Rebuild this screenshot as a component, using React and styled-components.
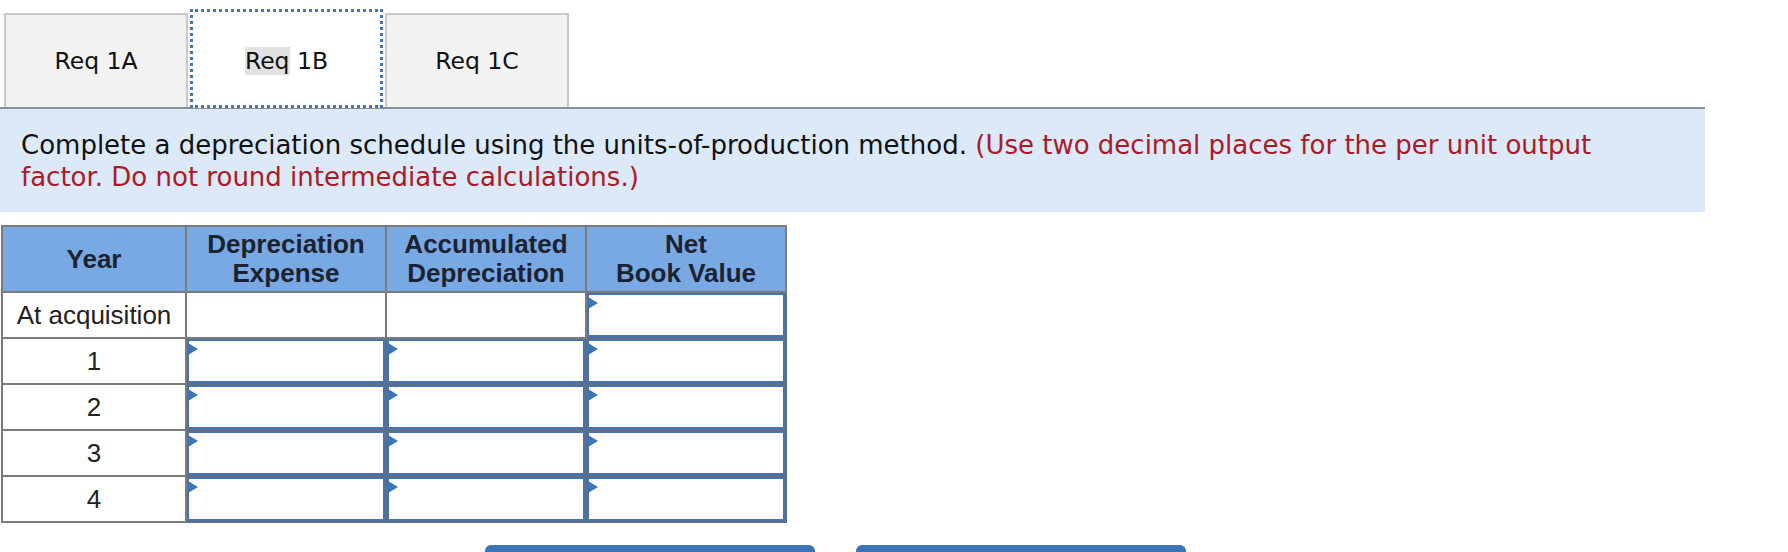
import React from "react";
import styled, { createGlobalStyle } from "styled-components";

const GlobalStyle = createGlobalStyle`
  html, body {
    margin: 0;
    padding: 0;
    background: #ffffff;
  }
  body {
    font-family: "DejaVu Sans", Verdana, sans-serif;
  }
`;

const Page = styled.div`
  width: 1788px;
  height: 552px;
  padding-top: 9px;
  box-sizing: border-box;
  overflow: hidden;
`;

const TabBar = styled.div`
  display: flex;
  align-items: flex-end;
  gap: 2px;
  padding-left: 4px;
`;

const Tab = styled.button`
  box-sizing: border-box;
  width: ${(p) => (p.$active ? "193px" : "184px")};
  height: ${(p) => (p.$active ? "99px" : "94px")};
  margin-bottom: ${(p) => (p.$active ? "-1px" : "0")};
  padding: ${(p) => (p.$active ? "5px 0 0" : "0")};
  position: relative;
  z-index: ${(p) => (p.$active ? 2 : 0)};
  border: ${(p) => (p.$active ? "3px dotted #4a74ad" : "2px solid #c9c9c9")};
  border-bottom: ${(p) => (p.$active ? "3px dotted #4a74ad" : "none")};
  background: ${(p) => (p.$active ? "#ffffff" : "#f2f2f2")};
  font-family: "DejaVu Sans", Verdana, sans-serif;
  font-size: 23.5px;
  color: #111;
  display: flex;
  align-items: center;
  justify-content: center;
`;

const Highlight = styled.span`
  background: #e2e2e2;
  line-height: 29px;
`;

const InfoBox = styled.div`
  position: relative;
  z-index: 1;
  width: 1705px;
  box-sizing: border-box;
  background: #dbe9f8;
  border-top: 2px solid #8c9094;
  padding: 20px 21px 19px;
  font-size: 26px;
  line-height: 32px;
  color: #111;
`;

const Note = styled.span`
  color: #ab1a24;
`;

const Table = styled.table`
  margin: 13px 0 0 1px;
  border-collapse: collapse;
  border: 2px solid #7b7b7b;
  font-family: "Liberation Sans", Arial, sans-serif;
`;

const HeadCell = styled.th`
  width: ${(p) => p.$w}px;
  height: 64px;
  padding: 0;
  background: #79a9e3;
  border: 2px solid #7b7b7b;
  color: #1b2333;
  font-size: 26px;
  font-weight: 700;
  line-height: 29px;
  text-align: center;
`;

const YearCell = styled.td`
  height: 44px;
  padding: 0;
  border: 2px solid #7b7b7b;
  font-size: 26px;
  color: #222;
  text-align: center;
`;

const PlainCell = styled.td`
  padding: 0;
  border: 2px solid #7b7b7b;
  background: #fff;
`;

const InputCell = styled.td`
  padding: 0;
  border: 2px solid #5d6f88;
  background: #fff;
`;

const InputBox = styled.div`
  position: relative;
  box-sizing: border-box;
  height: 44px;
  border: 2px solid #4b73ab;
  background: #fff;

  &::before {
    content: "";
    position: absolute;
    left: -1px;
    top: 2px;
    border-left: 10px solid #3c74b8;
    border-top: 6.5px solid transparent;
    border-bottom: 6.5px solid transparent;
  }
`;

const ButtonRow = styled.div`
  display: flex;
  gap: 41px;
  margin: 22px 0 0 485px;
`;

const NavButton = styled.button`
  width: 330px;
  height: 44px;
  border: none;
  border-radius: 6px 6px 0 0;
  background: #3b74b6;
`;

const years = ["1", "2", "3", "4"];

const App = () => {
  return (
    <Page>
      <GlobalStyle />
      <TabBar>
        <Tab>Req 1A</Tab>
        <Tab $active>
          <span>
            <Highlight>Req</Highlight> 1B
          </span>
        </Tab>
        <Tab>Req 1C</Tab>
      </TabBar>
      <InfoBox>
        Complete a depreciation schedule using the units-of-production method.{" "}
        <Note>
          (Use two decimal places for the per unit output
          <br />
          factor. Do not round intermediate calculations.)
        </Note>
      </InfoBox>
      <Table>
        <thead>
          <tr>
            <HeadCell $w={182}>Year</HeadCell>
            <HeadCell $w={198}>
              Depreciation
              <br />
              Expense
            </HeadCell>
            <HeadCell $w={198}>
              Accumulated
              <br />
              Depreciation
            </HeadCell>
            <HeadCell $w={198}>
              Net
              <br />
              Book Value
            </HeadCell>
          </tr>
        </thead>
        <tbody>
          <tr>
            <YearCell>At acquisition</YearCell>
            <PlainCell />
            <PlainCell />
            <InputCell>
              <InputBox />
            </InputCell>
          </tr>
          {years.map((y) => (
            <tr key={y}>
              <YearCell>{y}</YearCell>
              <InputCell>
                <InputBox />
              </InputCell>
              <InputCell>
                <InputBox />
              </InputCell>
              <InputCell>
                <InputBox />
              </InputCell>
            </tr>
          ))}
        </tbody>
      </Table>
      <ButtonRow>
        <NavButton aria-label="Previous requirement" />
        <NavButton aria-label="Next requirement" />
      </ButtonRow>
    </Page>
  );
};

export default App;
